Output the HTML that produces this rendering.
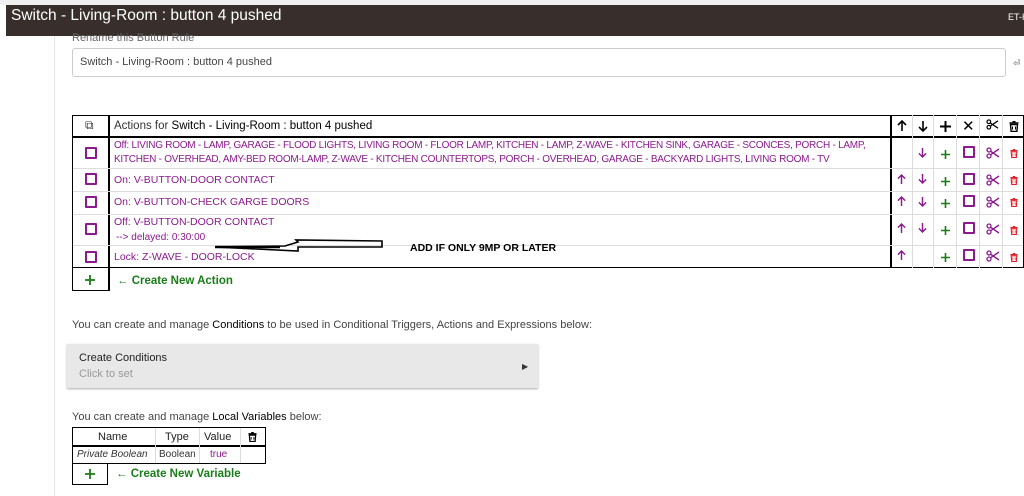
<!DOCTYPE html>
<html><head><meta charset="utf-8"><style>
body{margin:0;width:1024px;height:496px;overflow:hidden;background:#fff;font-family:"Liberation Sans",sans-serif;position:relative;font-size:11px;color:#333}
.a{position:absolute;white-space:nowrap}
.p{color:#8b1a8e}
.g{color:#1a7d1a}
.cb{position:absolute;width:8px;height:8px;border:2px solid #8b1a8e;border-radius:1px}
svg.a{overflow:visible}
</style></head><body>
<svg width="0" height="0" style="position:absolute">
<defs>
<symbol id="up" viewBox="0 0 10 12"><path d="M5 11V1M1 5L5 1L9 5" fill="none" stroke="currentColor" stroke-width="1.6"/></symbol>
<symbol id="dn" viewBox="0 0 10 12"><path d="M5 1V11M1 7L5 11L9 7" fill="none" stroke="currentColor" stroke-width="1.6"/></symbol>
<symbol id="pl" viewBox="0 0 10 10"><path d="M5 0V10M0 5H10" fill="none" stroke="currentColor" stroke-width="1.8"/></symbol>
<symbol id="tr" viewBox="0 0 10 12"><path d="M3.5 1h3v1.3h3v1.5h-9v-1.5h3z" fill="currentColor"/><path d="M1.5 4.5h7l-.6 7h-5.8z" fill="none" stroke="currentColor" stroke-width="1.4"/><path d="M3.5 6.5v3M6.5 6.5v3" stroke="currentColor" stroke-width="1"/></symbol>
<symbol id="sc" viewBox="0 0 14 12"><circle cx="3" cy="3" r="2" fill="none" stroke="currentColor" stroke-width="1.3"/><circle cx="3" cy="9" r="2" fill="none" stroke="currentColor" stroke-width="1.3"/><path d="M4.5 4.2L13 10M4.5 7.8L13 2" stroke="currentColor" stroke-width="1.4"/></symbol>
</defs></svg>
<div class="a" style="left:0;top:0;width:1024px;height:5px;background:#f0f0f0"></div>
<div class="a" style="left:6px;top:5px;width:1018px;height:31px;background:#382e2b"></div>
<div class="a" style="left:11px;top:7px;color:#fff;font-size:15.5px">Switch - Living-Room : button 4 pushed</div>
<div class="a" style="left:1008px;top:12px;color:#fff;font-size:9px">ET-H</div>
<div class="a" style="left:54px;top:36px;width:1px;height:460px;background:#e5e5e5"></div>
<div class="a" style="left:72px;top:32px;font-size:11px;color:#666">Rename this Button Rule</div>
<div class="a" style="left:72px;top:48px;width:932px;height:27px;border:1px solid #ccc;border-radius:3px"></div>
<div class="a" style="left:80px;top:56px;font-size:11px;color:#444">Switch - Living-Room : button 4 pushed</div>
<div class="a" style="left:1013px;top:58px;font-size:9px;color:#666">⏎</div>

<div class="a" style="left:72px;top:115px;width:952px;height:153px;border:1.5px solid #000;box-sizing:border-box"></div>
<div class="a" style="left:72px;top:136px;width:952px;height:1.5px;background:#000"></div>
<div class="a" style="left:108px;top:115px;width:1.5px;height:176px;background:#000"></div>
<div class="a" style="left:890px;top:115px;width:1.5px;height:153px;background:#000"></div>
<div class="a" style="left:912px;top:115px;width:1px;height:153px;background:#ddd"></div>
<div class="a" style="left:933px;top:115px;width:1px;height:153px;background:#ddd"></div>
<div class="a" style="left:956px;top:115px;width:1px;height:153px;background:#ddd"></div>
<div class="a" style="left:979px;top:115px;width:1px;height:153px;background:#ddd"></div>
<div class="a" style="left:1002px;top:115px;width:1px;height:153px;background:#ddd"></div>
<div class="a" style="left:73px;top:168px;width:950px;height:1px;background:#ddd"></div>
<div class="a" style="left:73px;top:191px;width:950px;height:1px;background:#ddd"></div>
<div class="a" style="left:73px;top:214px;width:950px;height:1px;background:#ddd"></div>
<div class="a" style="left:73px;top:245px;width:950px;height:1px;background:#ddd"></div>
<div class="a" style="left:72px;top:268px;width:38px;height:23px;border:1.5px solid #000;border-top:none;box-sizing:border-box"></div>

<div class="a" style="left:85px;top:118px;font-size:12px;color:#333">⧉</div>
<div class="a" style="left:114px;top:120px;font-size:11.5px;color:#333">Actions for <span style="color:#000">Switch - Living-Room : button 4 pushed</span></div>
<svg class="a" style="left:897px;top:120px;color:#000" width="10" height="12"><use href="#up"/></svg>
<svg class="a" style="left:918px;top:120px;color:#000" width="10" height="12"><use href="#dn"/></svg>
<svg class="a" style="left:940px;top:121px;color:#000" width="11" height="11"><use href="#pl"/></svg>
<div class="a" style="left:962px;top:117px;font-size:15px;color:#000">✕</div>
<svg class="a" style="left:986px;top:119px;color:#000" width="13" height="11"><use href="#sc"/></svg>
<svg class="a" style="left:1009px;top:120px;color:#000" width="10" height="12"><use href="#tr"/></svg>

<div class="a p" style="left:114px;top:139px;line-height:14px;font-size:10px;letter-spacing:-0.25px">Off: LIVING ROOM - LAMP, GARAGE - FLOOD LIGHTS, LIVING ROOM - FLOOR LAMP, KITCHEN - LAMP, Z-WAVE - KITCHEN SINK, GARAGE - SCONCES, PORCH - LAMP,<br>KITCHEN - OVERHEAD, AMY-BED ROOM-LAMP, Z-WAVE - KITCHEN COUNTERTOPS, PORCH - OVERHEAD, GARAGE - BACKYARD LIGHTS, LIVING ROOM - TV</div>
<div class="a p" style="left:114px;top:174px;font-size:10.5px">On: V-BUTTON-DOOR CONTACT</div>
<div class="a p" style="left:114px;top:196px;font-size:10.5px">On: V-BUTTON-CHECK GARGE DOORS</div>
<div class="a p" style="left:114px;top:216px;font-size:10.5px">Off: V-BUTTON-DOOR CONTACT</div>
<div class="a p" style="left:116px;top:232px;font-size:10px">--&gt; delayed: 0:30:00</div>
<div class="a p" style="left:114px;top:251px;font-size:10.5px">Lock: Z-WAVE - DOOR-LOCK</div>

<div class="cb" style="left:85px;top:147px"></div>
<div class="cb" style="left:85px;top:173px"></div>
<div class="cb" style="left:85px;top:196px"></div>
<div class="cb" style="left:85px;top:223px"></div>
<div class="cb" style="left:85px;top:251px"></div>

<!-- row 1 -->
<svg class="a p" style="left:918px;top:147px" width="9" height="11"><use href="#dn"/></svg>
<svg class="a g" style="left:941px;top:150px" width="9" height="9"><use href="#pl"/></svg>
<div class="cb" style="left:963px;top:146px"></div>
<svg class="a p" style="left:986px;top:147px" width="14" height="12"><use href="#sc"/></svg>
<svg class="a" style="left:1010px;top:148px;color:#e2202a" width="8" height="10"><use href="#tr"/></svg>
<!-- row 2 -->
<svg class="a p" style="left:897px;top:174px" width="9" height="11"><use href="#up"/></svg>
<svg class="a p" style="left:918px;top:173px" width="9" height="11"><use href="#dn"/></svg>
<svg class="a g" style="left:941px;top:177px" width="9" height="9"><use href="#pl"/></svg>
<div class="cb" style="left:963px;top:173px"></div>
<svg class="a p" style="left:986px;top:174px" width="14" height="12"><use href="#sc"/></svg>
<svg class="a" style="left:1010px;top:175px;color:#e2202a" width="8" height="10"><use href="#tr"/></svg>
<!-- row 3 -->
<svg class="a p" style="left:897px;top:196px" width="9" height="11"><use href="#up"/></svg>
<svg class="a p" style="left:918px;top:196px" width="9" height="11"><use href="#dn"/></svg>
<svg class="a g" style="left:941px;top:199px" width="9" height="9"><use href="#pl"/></svg>
<div class="cb" style="left:963px;top:195px"></div>
<svg class="a p" style="left:986px;top:196px" width="14" height="12"><use href="#sc"/></svg>
<svg class="a" style="left:1010px;top:197px;color:#e2202a" width="8" height="10"><use href="#tr"/></svg>
<!-- row 4 -->
<svg class="a p" style="left:897px;top:223px" width="9" height="11"><use href="#up"/></svg>
<svg class="a p" style="left:918px;top:222px" width="9" height="11"><use href="#dn"/></svg>
<svg class="a g" style="left:941px;top:226px" width="9" height="9"><use href="#pl"/></svg>
<div class="cb" style="left:963px;top:222px"></div>
<svg class="a p" style="left:986px;top:223px" width="14" height="12"><use href="#sc"/></svg>
<svg class="a" style="left:1010px;top:225px;color:#e2202a" width="8" height="10"><use href="#tr"/></svg>
<!-- row 5 -->
<svg class="a p" style="left:897px;top:250px" width="9" height="11"><use href="#up"/></svg>
<svg class="a g" style="left:941px;top:253px" width="9" height="9"><use href="#pl"/></svg>
<div class="cb" style="left:963px;top:249px"></div>
<svg class="a p" style="left:986px;top:250px" width="14" height="12"><use href="#sc"/></svg>
<svg class="a" style="left:1010px;top:252px;color:#e2202a" width="8" height="10"><use href="#tr"/></svg>

<svg class="a g" style="left:85px;top:275px" width="10" height="10"><use href="#pl"/></svg>
<div class="a g" style="left:117px;top:275px;font-size:11.5px;font-weight:bold">← Create New Action</div>

<svg class="a" style="left:210px;top:238px" width="180" height="16"><path d="M5 9 L75 8 L88 4 L86 2 L172 3 L172 9 L88 9 L88 13 Z" fill="none" stroke="#000" stroke-width="1.6"/><path d="M5 9 L70 9" stroke="#000" stroke-width="2.5"/></svg>
<div class="a" style="left:410px;top:242px;font-size:10.5px;font-weight:bold;color:#000">ADD IF ONLY 9MP OR LATER</div>

<div class="a" style="left:72px;top:319px;font-size:11px;color:#444">You can create and manage <span style="color:#000">Conditions</span> to be used in Conditional Triggers, Actions and Expressions below:</div>
<div class="a" style="left:67px;top:344px;width:471px;height:44px;background:#e8e8e8;box-shadow:0 1px 2px #aaa"></div>
<div class="a" style="left:79px;top:352px;font-size:11px;color:#222">Create Conditions</div>
<div class="a" style="left:79px;top:368px;font-size:11px;color:#999">Click to set</div>
<div class="a" style="left:522px;top:362px;font-size:8px;color:#333">▶</div>

<div class="a" style="left:72px;top:411px;font-size:11px;color:#444">You can create and manage <span style="color:#000">Local Variables</span> below:</div>
<div class="a" style="left:72px;top:427px;width:194px;height:37px;border:1.5px solid #000;box-sizing:border-box"></div>
<div class="a" style="left:72px;top:445px;width:194px;height:1.5px;background:#000"></div>
<div class="a" style="left:155px;top:428px;width:1px;height:35px;background:#ddd"></div>
<div class="a" style="left:199px;top:428px;width:1px;height:35px;background:#ddd"></div>
<div class="a" style="left:240px;top:428px;width:1px;height:35px;background:#ddd"></div>
<div class="a" style="left:98px;top:431px;font-size:11px;color:#222">Name</div>
<div class="a" style="left:165px;top:431px;font-size:11px;color:#222">Type</div>
<div class="a" style="left:204px;top:431px;font-size:11px;color:#222">Value</div>
<svg class="a" style="left:248px;top:431px;color:#000" width="9" height="11"><use href="#tr"/></svg>
<div class="a" style="left:77px;top:449px;font-size:10px;font-style:italic;color:#333">Private Boolean</div>
<div class="a" style="left:159px;top:449px;font-size:10px;color:#333">Boolean</div>
<div class="a p" style="left:210px;top:449px;font-size:10px">true</div>
<div class="a" style="left:72px;top:463px;width:36px;height:22px;border:1.5px solid #000;border-top:none;box-sizing:border-box"></div>
<svg class="a g" style="left:85px;top:469px" width="10" height="10"><use href="#pl"/></svg>
<div class="a g" style="left:116px;top:468px;font-size:11.5px;font-weight:bold">← Create New Variable</div>
</body></html>
